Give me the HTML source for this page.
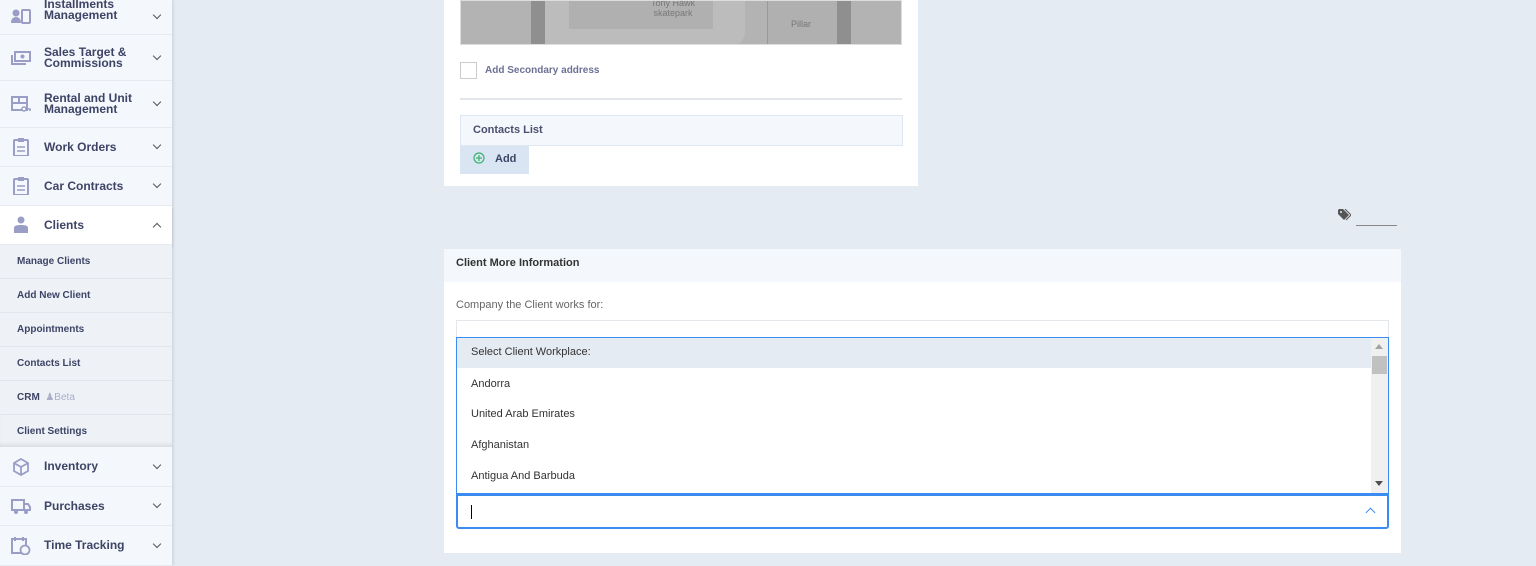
<!DOCTYPE html>
<html><head><style>
*{box-sizing:border-box;margin:0;padding:0}
body{width:1536px;height:566px;overflow:hidden;background:#e5ebf3;font-family:"Liberation Sans",sans-serif;position:relative}
.sb{position:absolute;left:0;top:0;width:172px;height:566px;background:#f4f7fb;box-shadow:1px 0 3px rgba(0,0,0,.12)}
.it{position:absolute;left:0;width:172px;border-bottom:1px solid #e6ebf1;color:#3d4465;font-size:12px;font-weight:bold;display:flex;align-items:center}
.it .ic{position:absolute;left:11px;width:20px;height:18px}
.it .t{position:absolute;left:44px;line-height:11px}
.it .ch{position:absolute;right:12px;width:6px;height:6px;border-right:1.5px solid #555;border-bottom:1.5px solid #555;transform:rotate(45deg);margin-top:-4px}
.sub{position:absolute;left:0;width:172px;background:#eef2f7;border-bottom:1px solid #e1e6ed;font-size:10px;font-weight:bold;color:#3d4465;padding-left:17px;display:flex;align-items:center}
.card{position:absolute;background:#fff}
svg.ic *{}
</style></head><body>
<div class="sb">
 <div class="it" style="top:0;height:35px"><svg class="ic" viewBox="0 0 20 18"><circle cx="5" cy="5" r="3.5" fill="#9a9ec6"/><path d="M0 15c0-4 2-6 5-6s5 2 5 6z" fill="#9a9ec6"/><rect x="11" y="2" width="8" height="13" rx="1" fill="none" stroke="#9a9ec6" stroke-width="2"/></svg><span class="t" style="top:-1px">Installments<br>Management</span><span class="ch"></span></div>
 <div class="it" style="top:35px;height:46px"><svg class="ic" viewBox="0 0 20 18"><rect x="4" y="3" width="15" height="9" fill="none" stroke="#9a9ec6" stroke-width="2"/><circle cx="11.5" cy="7.5" r="2" fill="#9a9ec6"/><path d="M1 6v9h14" fill="none" stroke="#9a9ec6" stroke-width="2"/></svg><span class="t">Sales Target &amp;<br>Commissions</span><span class="ch"></span></div>
 <div class="it" style="top:81px;height:47px"><svg class="ic" viewBox="0 0 20 18"><rect x="1" y="2" width="15" height="13" fill="none" stroke="#9a9ec6" stroke-width="2"/><path d="M1 8h15M8 2v6" stroke="#9a9ec6" stroke-width="2"/><circle cx="13" cy="14" r="2" fill="#fff" stroke="#9a9ec6" stroke-width="1.5"/><path d="M15 14h4v2" stroke="#9a9ec6" fill="none" stroke-width="1.5"/></svg><span class="t">Rental and Unit<br>Management</span><span class="ch"></span></div>
 <div class="it" style="top:128px;height:39px"><svg class="ic" viewBox="0 0 20 18"><rect x="3" y="2" width="14" height="16" rx="1" fill="none" stroke="#9a9ec6" stroke-width="2"/><rect x="7" y="0" width="6" height="4" fill="#9a9ec6"/><path d="M6 9h8M6 13h8" stroke="#9a9ec6" stroke-width="1.5"/></svg><span class="t">Work Orders</span><span class="ch"></span></div>
 <div class="it" style="top:167px;height:39px"><svg class="ic" viewBox="0 0 20 18"><rect x="3" y="2" width="14" height="16" rx="1" fill="none" stroke="#9a9ec6" stroke-width="2"/><rect x="7" y="0" width="6" height="4" fill="#9a9ec6"/><path d="M6 9h8M6 13h8" stroke="#9a9ec6" stroke-width="1.5"/></svg><span class="t">Car Contracts</span><span class="ch"></span></div>
 <div class="it" style="top:206px;height:39px;background:#fff;box-shadow:0 2px 3px rgba(0,0,0,.12)"><svg class="ic" viewBox="0 0 20 18"><circle cx="10" cy="4" r="3.5" fill="#9a9ec6"/><path d="M3 17v-5c0-2 2-3 7-3s7 1 7 3v5z" fill="#9a9ec6"/></svg><span class="t">Clients</span><span class="ch" style="transform:rotate(-135deg);margin-top:4px"></span></div>
 <div class="sub" style="top:245px;height:34px">Manage Clients</div>
 <div class="sub" style="top:279px;height:34px">Add New Client</div>
 <div class="sub" style="top:313px;height:34px">Appointments</div>
 <div class="sub" style="top:347px;height:34px">Contacts List</div>
 <div class="sub" style="top:381px;height:34px">CRM&nbsp;&nbsp;<span style="color:#a9aec9;font-weight:normal">&#9823;Beta</span></div>
 <div class="sub" style="top:415px;height:32px;border:none;box-shadow:inset 0 -4px 4px -2px rgba(0,0,0,.1)">Client Settings</div>
 <div class="it" style="top:447px;height:40px"><svg class="ic" viewBox="0 0 20 18"><path d="M10 1l7 4v8l-7 4-7-4V5z M3 5l7 4 7-4 M10 9v8" fill="none" stroke="#9a9ec6" stroke-width="1.8"/></svg><span class="t">Inventory</span><span class="ch"></span></div>
 <div class="it" style="top:487px;height:39px"><svg class="ic" viewBox="0 0 20 18"><rect x="1" y="3" width="12" height="10" fill="none" stroke="#9a9ec6" stroke-width="2"/><path d="M13 7h4l2 3v3h-6" fill="none" stroke="#9a9ec6" stroke-width="2"/><circle cx="5" cy="15" r="2" fill="#9a9ec6"/><circle cx="15" cy="15" r="2" fill="#9a9ec6"/></svg><span class="t">Purchases</span><span class="ch"></span></div>
 <div class="it" style="top:526px;height:40px"><svg class="ic" viewBox="0 0 20 18"><rect x="1" y="2" width="14" height="14" fill="none" stroke="#9a9ec6" stroke-width="2"/><circle cx="14" cy="13" r="4.5" fill="#f4f7fb" stroke="#9a9ec6" stroke-width="1.8"/><path d="M4 0v4M12 0v4" stroke="#9a9ec6" stroke-width="2"/></svg><span class="t">Time Tracking</span><span class="ch"></span></div>
</div>

<div class="card" style="left:444px;top:0;width:474px;height:186px">
 <div style="position:absolute;left:16px;top:0;width:442px;height:45px;background:#b3b3b3;border:1px solid #ddd;overflow:hidden">
  <div style="position:absolute;left:70px;top:0;width:14px;height:45px;background:#8f8f8f"></div>
  <div style="position:absolute;left:84px;top:0;width:200px;height:45px;background:#bcbcbc;border-radius:0 0 14px 0"></div>
  <div style="position:absolute;left:108px;top:0;width:144px;height:28px;background:#b0b0b0"></div>
  <div style="position:absolute;left:190px;top:-3px;font-size:9px;color:#777;text-align:center;line-height:10px">Tony Hawk<br>skatepark</div>
  <div style="position:absolute;left:306px;top:0;width:70px;height:45px;background:#b0b0b0;border-left:1px solid #999"></div>
  <div style="position:absolute;left:330px;top:18px;font-size:9px;color:#777">Pillar</div>
  <div style="position:absolute;left:376px;top:0;width:14px;height:45px;background:#8f8f8f"></div>
 </div>
 <div style="position:absolute;left:16px;top:62px;width:17px;height:17px;border:1px solid #ccc"></div>
 <div style="position:absolute;left:41px;top:65px;font-size:10px;font-weight:bold;color:#6c7196">Add Secondary address</div>
 <div style="position:absolute;left:16px;top:98px;width:442px;height:2px;background:#e3e6ea"></div>
 <div style="position:absolute;left:16px;top:115px;width:443px;height:31px;background:#f4f7fb;border:1px solid #dfe7f2;font-size:11px;font-weight:bold;color:#4a4f6e;padding:8px 12px">Contacts List</div>
 <div style="position:absolute;left:16px;top:146px;width:69px;height:28px;background:#d9e5f2;font-size:11px;font-weight:bold;color:#3d4465;padding:7px 0 0 35px">Add</div>
 <svg style="position:absolute;left:29px;top:152px" width="12" height="12" viewBox="0 0 12 12"><circle cx="6" cy="6" r="5" fill="none" stroke="#3cb371" stroke-width="1.2"/><path d="M6 3v6M3 6h6" stroke="#3cb371" stroke-width="1.2"/></svg>
</div>

<svg style="position:absolute;left:1338px;top:209px" width="13" height="12" viewBox="0 0 13 12"><path d="M0 1v4l6 6 5-5-6-6H1z" fill="#555"/><path d="M7 0l6 6-5 5" fill="none" stroke="#555" stroke-width="1"/><circle cx="3" cy="3" r="1" fill="#e5ebf3"/></svg>
<div style="position:absolute;left:1356px;top:225px;width:41px;height:1px;background:#888"></div>

<div class="card" style="left:444px;top:249px;width:957px;height:304px">
 <div style="height:33px;background:#f4f7fb;font-size:11px;font-weight:bold;color:#333;padding:8px 12px">Client More Information</div>
 <div style="position:absolute;left:12px;top:50px;font-size:11px;color:#666">Company the Client works for:</div>
 <div style="position:absolute;left:12px;top:71px;width:933px;height:18px;border:1px solid #e3e6ea;border-bottom:none"></div>
 <div style="position:absolute;left:12px;top:88px;width:933px;height:157px;border:1px solid #3b8cf0;font-size:11px;color:#333;overflow:hidden">
  <div style="height:30px;background:#e5ebf3;padding:8px 14px">Select Client Workplace:</div>
  <div style="height:31px;padding:10px 14px">Andorra</div>
  <div style="height:31px;padding:9px 14px">United Arab Emirates</div>
  <div style="height:31px;padding:9px 14px">Afghanistan</div>
  <div style="height:31px;padding:9px 14px">Antigua And Barbuda</div>
  <div style="position:absolute;right:0;top:0;width:17px;height:155px;background:#f0f0f0">
   <div style="position:absolute;left:4px;top:6px;border:4px solid transparent;border-bottom:5px solid #a3a3a3;border-top:none"></div>
   <div style="position:absolute;left:1px;top:18px;width:15px;height:18px;background:#c1c1c1"></div>
   <div style="position:absolute;left:4px;top:143px;border:4px solid transparent;border-top:5px solid #505050;border-bottom:none"></div>
  </div>
 </div>
 <div style="position:absolute;left:12px;top:245px;width:933px;height:35px;border:2px solid #3b8cf0;border-radius:0 0 3px 3px">
  <div style="position:absolute;left:13px;top:9px;width:1px;height:14px;background:#000"></div>
  <div style="position:absolute;right:13px;top:13px;width:7px;height:7px;border-left:1.5px solid #3b8cf0;border-top:1.5px solid #3b8cf0;transform:rotate(45deg)"></div>
 </div>
</div>
</body></html>
